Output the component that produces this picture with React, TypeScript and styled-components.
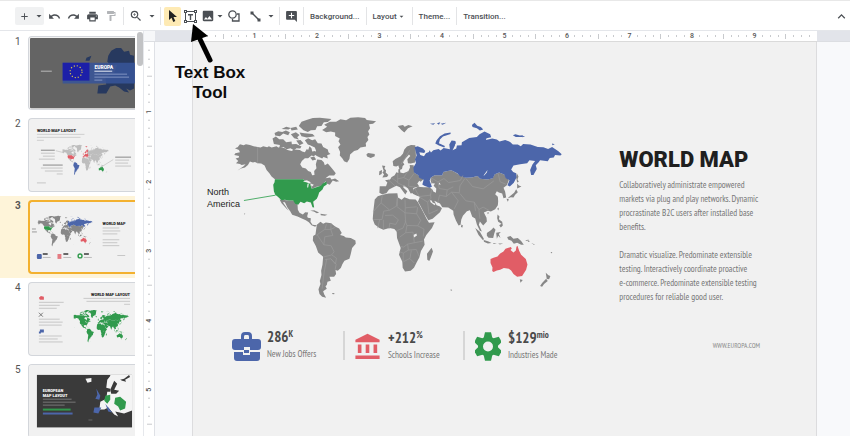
import React from "react";
import styled, { createGlobalStyle, css } from "styled-components";
import {
  MdAccountBalance,
  MdAdd,
  MdAddComment,
  MdArrowDropDown,
  MdFormatPaint,
  MdImage,
  MdKeyboardArrowUp,
  MdPrint,
  MdRedo,
  MdUndo,
  MdZoomIn,
} from "react-icons/md";

const ui = `Roboto, "Liberation Sans", sans-serif`;
const narrow = `"Liberation Sans Narrow", "PT Sans Narrow", Roboto, sans-serif`;

const GlobalStyle = createGlobalStyle`
  *, *::before, *::after { box-sizing: border-box; }
  body { margin: 0; background: #fff; font-family: ${ui}; color: #444; }
  h1, p, ol { margin: 0; padding: 0; }
  svg { display: block; }
  button { border: 0; padding: 0; background: none; font: inherit; color: inherit; }
`;

const Page = styled.div`
  position: relative;
  display: flex;
  flex-direction: column;
  height: 100vh;
  overflow: hidden;
`;

const Toolbar = styled.header`
  display: flex;
  align-items: center;
  gap: 1px;
  height: 31px;
  flex: none;
  padding: 2px 0 0 15px;
  border-bottom: 1px solid #e4e6ea;
  box-shadow: inset 0 2px 0 -1px #e8e8e8;
  color: #4b4f54;
`;

const Group = styled.div<{ $filled?: boolean }>`
  display: flex;
  align-items: center;
  height: 18px;
  border-radius: 2px;
  background: ${(p) => (p.$filled ? "#f0f1f2" : "transparent")};
`;

const ToolButton = styled.button<{ $w?: number; $active?: boolean; $faded?: boolean }>`
  display: flex;
  align-items: center;
  justify-content: center;
  flex: none;
  width: ${(p) => p.$w ?? 18}px;
  height: 19px;
  border-radius: 2px;
  ${(p) => p.$active && css`background: #feeab4; color: #222;`}
  ${(p) => p.$faded && css`color: #b2b4b7;`}

  svg { flex: none; }
`;

const TextButton = styled.button`
  display: flex;
  align-items: center;
  height: 19px;
  padding: 0 3px;
  font-size: 8px;
  font-weight: 500;
  white-space: nowrap;
`;

const Separator = styled.span`
  width: 1px;
  height: 18px;
  margin: 0 2px;
  background: #e3e4e6;
`;

const Spacer = styled.span`
  flex: 1;
`;

const Workspace = styled.div`
  display: flex;
  flex: 1;
  min-height: 0;
`;

const Filmstrip = styled.nav`
  display: flex;
  width: 144px;
  flex: none;
  overflow: hidden;
  border-right: 1px solid #e6e8ec;
`;

const FilmList = styled.ol`
  flex: 1;
  list-style: none;
  padding-top: 1px;
  overflow: hidden;
`;

const FilmRow = styled.li<{ $selected?: boolean }>`
  display: flex;
  height: 82px;
  padding: 4px 0;
  background: ${(p) => (p.$selected ? "#fef4d9" : "transparent")};
`;

const FilmNumber = styled.span<{ $selected?: boolean }>`
  width: 28px;
  padding-left: 15px;
  font-size: 10px;
  line-height: 12px;
  font-weight: ${(p) => (p.$selected ? 700 : 400)};
  color: #555;
`;

const Thumb = styled.button<{ $selected?: boolean }>`
  flex: 1;
  height: 74px;
  border: ${(p) => (p.$selected ? "2px solid #f3b12f" : "1px solid #d3d6db")};
  border-right: 0;
  border-radius: 4px 0 0 4px;
  background: #f1f1f1;
  overflow: hidden;
`;

const ThumbArt = styled.svg`
  width: 100%;
  height: 100%;
`;

const ScrollTrack = styled.div`
  width: 8px;
  padding: 1px 0 0 2px;
`;

const ScrollThumb = styled.div`
  height: 34px;
  border-radius: 3px;
  background: #c2c3c5;
`;

const Editor = styled.main`
  display: grid;
  grid-template-columns: 11px minmax(0, 37fr) minmax(0, 625fr) minmax(0, 33fr);
  grid-template-rows: 11px minmax(0, 1fr);
  flex: 1;
  min-width: 0;
`;

const RulerShade = styled.div<{ $corner?: boolean }>`
  background: ${(p) => (p.$corner ? "#f6f7f9" : "#e2e4ea")};
  border-bottom: 1px solid #dcdee2;
`;

const HRuler = styled.div`
  display: flex;
  align-items: center;
  padding: 0 4px;
  border-bottom: 1px solid #dadada;
  background: #fff;
`;

const VRuler = styled.div`
  display: flex;
  flex-direction: column;
  align-items: center;
  padding: 4px 0 7px;
  border-right: 1px solid #dfe1e6;
  background: #fff;
`;

const Mark = styled.span<{ $vertical?: boolean }>`
  display: flex;
  flex: 1 1 0;
  min-width: 0;
  min-height: 0;
  align-items: center;
  justify-content: center;
  font-size: 7px;
  line-height: 8px;
  font-weight: 500;
  color: #555;
  writing-mode: ${(p) => (p.$vertical ? "vertical-rl" : "horizontal-tb")};
  rotate: ${(p) => (p.$vertical ? "180deg" : "0deg")};
`;

const Tick = styled.i<{ $vertical?: boolean; $long?: boolean }>`
  display: block;
  width: ${(p) => (p.$vertical && p.$long ? 5 : p.$vertical ? 2 : 1)}px;
  height: ${(p) => (!p.$vertical && p.$long ? 5 : p.$vertical ? 1 : 2)}px;
  background: #c8cacd;
`;

const Gutter = styled.div`
  background: #f8f9fb;
`;

const Slide = styled.section`
  display: grid;
  grid-template-columns: minmax(0, 427fr) minmax(0, 197fr);
  align-content: start;
  padding-top: 63px;
  border-left: 1px solid #dcdcde;
  border-right: 1px solid #dcdcde;
  background: #f1f1f1;
`;

const Figure = styled.div`
  display: flex;
  flex-direction: column;
  gap: 22px;
`;

const MapFrame = styled.div`
  position: relative;
  margin-left: 12px;
`;

const MapArt = styled.svg`
  width: 100%;
`;

const MapLabel = styled.p`
  position: absolute;
  left: 2px;
  top: 81px;
  font: 9px/12px "Liberation Sans", Arial, sans-serif;
  color: #222;
`;

const Stats = styled.div`
  display: flex;
  margin-left: 30px;
`;

const Stat = styled.div`
  display: flex;
  align-items: center;
  gap: 6px;
  width: 120px;
  height: 36px;
  padding-left: 9px;

  & + & {
    border-left: 2px solid #d6d6d6;
    height: 29px;
    margin-top: 4px;
    padding-left: 8px;
  }
`;

const StatIcon = styled.span<{ $color: string }>`
  display: flex;
  justify-content: center;
  flex: none;
  width: 29px;
  margin-top: 3px;
  color: ${(p) => p.$color};
`;

const StatText = styled.div`
  display: flex;
  flex-direction: column;
  gap: 2px;
  font-family: ${narrow};
  white-space: nowrap;
`;

const StatValue = styled.strong`
  font-size: 15px;
  line-height: 17px;
  color: #4a4a4a;

  sup {
    font-size: 9px;
    line-height: 1;
    vertical-align: 5px;
  }
`;

const StatName = styled.span`
  font-size: 9px;
  line-height: 14px;
  color: #777;
`;

const Copy = styled.article`
  padding: 41px 50px 0 0;
  font: 9px/14px ${narrow};
  color: #777;
  white-space: nowrap;

  p + p { margin-top: 14px; }
`;

const Heading = styled.h1`
  margin-bottom: 5px;
  font: 900 22px/27px Roboto, sans-serif;
  color: #1f1f1f;
`;

const SiteLink = styled.a`
  display: block;
  margin-top: 35px;
  padding-right: 6px;
  text-align: right;
  font-size: 7px;
  color: #8a8a8a;
  text-decoration: none;
`;

const Callout = styled.aside`
  position: absolute;
  left: 172px;
  top: 22px;
  width: 76px;
  text-align: center;
  font: bold 17px/20px "Liberation Sans", Arial, sans-serif;
  color: #0c0c0c;
  pointer-events: none;
`;

const Arrow = styled.svg`
  width: 40px;
  height: 41px;
  margin-left: 2px;
`;

type MapColors = {
  land: string;
  north?: string;
  usa?: string;
  south?: string;
  europe?: string;
  russia?: string;
  australia?: string;
  lines?: string;
};

function WorldMap({ land, north, usa, south, europe, russia, australia, lines }: MapColors) {
  return (
    <g fill={land} strokeLinejoin="round">
      <g fill={north ?? land}>
        <path d="M30 130L38 127 45 118 56 121 63 118 75 120 86 124 98 126 107 128 115 124 127 127 132 124 140 128 155 124 160 128 168 127 180 130 188 135 200 138 208 134 225 135 232 140 240 142 246 132 250 135 254 124 260 130 262 140 271 138 275 147 267 154 260 152 250 160 240 160 231 168 226 178 232 188 243 191 250 198 258 201 262 211 269 210 268 198 275 190 273 178 277 164 290 165 297 172 300 181 309 176 318 186 326 196 333 205 328 212 313 212 302 220 316 218 320 224 331 221 343 229 334 231 324 227 315 240 305 236 302 229 290 243 275 246 262 252 256 238 245 230 235 223 150 223 140 215 134 206 125 195 119 182 109 176 98 175 90 171 84 173 75 170 69 180 60 188 48 191 35 198 56 184 62 178 50 180 45 177 33 175 40 168 32 161 42 158 42 153 28 150 31 145 45 142 42 135Z" />
        <path d="M143 101L153 95 163 103 175 103 184 112 200 110 201 118 214 117 230 125 226 131 215 130 207 136 197 130 185 133 176 126 163 130 165 120 147 117ZM149 84L160 79 172 81 183 77 195 82 190 91 175 86 165 94 151 92ZM170 72L184 65 198 69 191 74ZM197 69L214 65 219 74 200 77ZM198 88L213 82 224 90 217 97 222 104 208 100ZM222 63L230 50 245 45 264 39 285 38 320 42 309 51 297 52 290 63 277 64 272 75 258 76 249 81 236 76ZM224 83L239 85 263 87 270 94 246 98 230 94ZM240 106L250 100 262 106 271 103 279 115 290 116 295 126 309 134 311 142 317 147 307 151 309 161 296 156 292 161 276 153 266 146 274 138 270 128 256 121 249 119ZM214 107L227 105 236 115 224 121ZM256 158L268 155 274 164 263 167Z" />
        <path d="M292 75L307 65 298 59 315 50 334 50 347 43 364 46 377 38 400 37 421 39 426 45 454 49 445 56 433 58 436 70 430 79 434 89 428 96 431 105 423 115 424 125 407 128 399 135 388 138 376 149 374 162 367 173 358 169 353 161 345 152 346 141 340 127 347 119 341 109 345 101 331 93 331 83 318 80 304 82Z" />
        <path d="M164 284L192 287 205 287 218 299 219 315 224 324 234 329 241 322 250 323 247 334 249 339 258 340 257 351 263 360 276 361 271 366 260 361 252 352 243 346 231 341 218 335 202 330 196 319 188 309 180 292 174 292 191 317 185 312 170 295ZM256 318L268 316 283 323 276 325 267 320ZM287 327L308 330 300 333 288 331Z" />
      </g>
      <path fill={usa ?? land} d="M150 223L235 223 240 228 248 231 255 237 261 252 270 249 288 243 294 236 305 230 306 239 297 245 293 254 283 263 280 273 276 282 265 291 268 308 263 307 258 293 246 290 238 295 227 291 220 300 211 297 205 287 192 287 180 285 170 286 158 275 151 270 147 259 145 240 149 232Z" />
      <path fill="#f1f1f1" d="M234 230L246 226 258 232 254 236 244 232ZM248 237L252 236 250 248 247 248ZM256 235L267 240 261 246Z" />
      <path fill={south ?? land} d="M276 360L287 351 295 357 303 353 319 355 331 365 343 371 351 385 346 391 357 394 363 398 378 400 392 407 393 417 382 430 378 448 374 462 359 468 353 478 348 490 339 498 332 496 334 508 328 516 314 516 318 528 308 531 306 541 302 545 306 552 295 560 298 569 304 579 292 576 284 568 281 554 287 538 285 529 290 511 289 498 293 480 295 456 280 443 273 424 264 407 265 394 272 389Z" />
      <path d="M425 149L430 144 450 147 450 154 438 159 427 155ZM322 566l7-1-1 4-6-1ZM58 325l3 2-3 3Z" />

      <g transform="translate(435 0)">
        <g fill={europe ?? land}>
          <path d="M137 121L124 120 112 125 104 134 100 146 93 154 77 162 69 169 71 183 80 185 86 182 90 195 97 192 99 183 104 179 100 172 106 162 113 155 118 149 122 153 113 163 115 175 123 176 136 173 139 153ZM37 182L47 183 44 190 49 197 48 203 56 210 52 216 38 218 43 208 38 203 42 198ZM29 199L37 195 36 207 28 211ZM84 63L100 60 105 65 116 60 129 64 115 70 104 83 95 75Z" />
          <path d="M30 244L49 244 53 233 46 226 61 224 66 216 75 211 80 202 86 204 86 193 91 192 92 203 101 205 116 199 121 188 120 180 132 181 134 203 146 211 161 224 153 231 149 228 143 236 149 245 134 248 130 252 133 264 123 266 115 251 102 241 101 248 113 259 107 269 102 262 91 247 80 243 68 249 58 254 50 265 37 268 29 264Z" />
        </g>
        <path d="M131 253L145 246 162 247 179 247 190 255 188 241 183 228 184 218 195 211 218 211 221 201 245 196 258 203 270 210 289 219 306 218 324 213 332 222 354 224 369 220 376 208 389 203 404 209 418 226 412 241 402 249 407 261 410 278 402 280 398 266 388 263 382 259 377 268 385 276 386 289 385 301 377 313 364 320 355 318 343 323 351 339 352 350 341 362 331 350 328 360 337 380 331 378 322 359 317 341 308 336 301 316 292 319 280 333 275 345 273 360 267 362 259 347 252 329 251 318 236 308 218 307 211 296 194 288 201 301 210 304 217 310 211 322 189 342 176 346 164 326 152 303 145 290 151 276 142 273 129 267Z" />
        <path d="M15 284L24 274 38 270 57 266 83 265 85 278 96 285 104 277 120 283 138 284 145 292 153 307 163 326 170 340 178 354 195 352 187 370 170 391 163 404 165 420 154 439 149 458 142 471 133 489 123 498 106 500 99 489 98 471 88 450 93 430 82 400 81 381 74 373 59 370 41 375 29 370 15 359 9 343 11 318Z" />
        <path d="M186 429L190 440 184 457 179 469 173 465 172 447ZM276 359l4 3-2 7-4-3ZM317 370L331 381 343 402 341 407 327 391ZM343 406L357 410 366 415 355 416 343 411ZM352 385L365 376 372 368 378 375 374 387 371 400 357 399 352 393ZM380 384L394 382 388 388 393 400 386 393 382 402ZM370 415l12 1-9 2ZM386 416l15 0-10 3ZM384 329L390 335 388 343 398 351 400 362 394 368 389 361 396 357 386 351 383 340ZM383 312l5-4-1 9ZM353 323l6 0-4 5ZM413 397L423 394 432 402 445 400 455 409 463 420 455 420 443 414 433 417 426 408 416 404ZM467 407l11-3-5 5ZM477 406l4 4-6 2ZM485 414l12 6-4 0ZM451 524L460 526 453 534ZM529 504L537 512 543 514 539 524 532 523ZM530 522L535 529 524 538 518 546 512 544 518 535ZM544 442l5 0-4 4ZM508 457l5 2ZM243 554l5 2-4 3Z" />
        <path d="M443 236L448 242 456 245 443 251ZM440 253L445 262 437 270 432 278 424 277 414 281 421 274 434 264ZM411 282l7 1-3 8ZM442 205L447 215 444 224 448 231 443 233 440 217Z" />
        <g fill={russia ?? land}>
          <path d="M135 127L144 124 160 131 167 138 164 144 149 142 152 150 163 154 169 145 178 141 180 136 184 143 191 136 207 132 213 137 222 129 241 133 239 119 246 107 258 108 256 122 249 136 260 131 262 122 276 121 277 112 299 99 322 96 330 88 345 80 362 88 365 97 351 100 349 105 368 101 382 104 390 110 407 105 422 111 430 119 445 119 454 124 461 117 483 119 505 126 522 127 536 132 548 126 567 139 577 148 573 152 557 150 553 158 541 159 535 169 512 166 507 173 499 181 502 192 492 210 485 210 482 195 489 179 497 168 480 166 473 175 452 178 432 182 425 194 431 201 440 205 441 218 433 234 421 245 414 241 420 226 409 220 404 209 389 203 376 208 370 220 354 224 332 222 324 213 306 218 289 219 272 214 263 205 245 196 221 201 218 211 195 211 184 218 180 228 187 246 180 249 164 243 158 239 162 225 149 219 146 211 133 203 131 188 139 174 136 163 141 152Z" />
          <path d="M197 116L201 106 211 94 225 86 243 83 243 87 220 95 211 104 208 115 226 123 224 128 208 122ZM307 60L315 53 323 62 334 66 341 74 331 77 322 70 309 66ZM181 56l16-1-6 4ZM202 55l10-3-4 7ZM213 56l17-3-11 6ZM430 91l8-3 13 4 10-1-4 5-18 0ZM455 93l12 0-7 4ZM548 116l8 2-7 3ZM249 111l9 0 0 7Z" />
        </g>
        <path fill="#f1f1f1" d="M342 212l12-17-2 8-8 9ZM187 235L196 236 192 243 200 251 199 264 191 260 187 250ZM131 391L140 386 142 392 133 398ZM181 286l5 1 3 6 9 4-3 4-12-9ZM207 238l3-5 3 7Z" />
        <path fill={australia ?? land} d="M363 463L372 459 384 455 392 446 402 440 408 432 424 427 427 431 423 436 432 443 439 437 441 426 444 423 449 438 455 450 469 463 474 479 470 495 458 514 443 516 432 508 425 497 418 492 403 490 392 495 382 497 372 502 368 499 369 488 363 475Z" />
      </g>

      {lines && (
        <g fill="none" stroke={lines} strokeWidth="2">
          <path d="M98 126V175M305 358l-5 16-15 10-10 8M300 374l18 0 1-18M318 374l14-7M318 374l6 18-24 4-3 24-20-30M297 420l22 3 9 18-8 10-22 5M320 450l15 10-3 18-14-16-18 3M318 462l16 17-3 16M306 462l-8 40-6 50" />
          <g transform="translate(435 0)">
            <path d="M38 271L34 294 60 316 80 304 83 278M34 294L11 320M60 316l-18 3-5 25-27 0M80 304l26 20 2 26-8 20-20 8M83 278v26M106 285l1 24 34-3M107 309l-1 15 35 3 3-20M46 332l23-1 17 14-8 14-18-4-2 18M141 327l12 20-9 16-32-1-6-15M144 363l19 10-2 22M112 362l-4 22-18 13M108 384l22-2 4 32-20 4-12 9-11-2M134 414l26-5M114 418l2 18-15 9-11-4M116 436l24-2 8 20M101 445l-1 28M125 437l-4 24-18 9M120 461l14 14M30 344l-6 26M41 345v29" />
            <path d="M56 225l20 18M65 218l19 14M84 206l0 28 24 12M84 222l18-4 12-18M102 218l16 8 15-20M118 226l-1 18 20 3M120 136l-14 24-12 18M135 250l14 25 34-4 3-18M150 277l24 15 10-12-2-14M174 292l4 35 27-12M185 219l20 12 18-10 14 12 35-6 8-15M205 231l4 20 24 4 18-9M233 255l-3 20-20-4-6 24M230 275l16-13 23 2 2-21 15-22M246 262l20 26-12 24M271 266l18 22 25 4 4 26M289 221l20 24 32 7 32-24M314 292l14 22 13-7 18 10M328 314l3 28M185 219l4 14M386 206l6 25 17 7" />
          </g>
        </g>
      )}
    </g>
  );
}

const mainColors: MapColors = { land: "#878787", usa: "#319a4d", russia: "#4c66aa", australia: "#e15d66", lines: "#9b9b9b" };

function Lines({ x, y, widths, color = "#c6c6c6", end }: { x: number; y: number; widths: number[]; color?: string; end?: boolean }) {
  return (
    <g fill={color}>
      {widths.map((w, i) => (
        <rect key={i} x={end ? x - w : x} y={y + i * 3} width={w} height="1" />
      ))}
    </g>
  );
}

const titleProps = { fontFamily: "Roboto, sans-serif", fontWeight: 900 };

const Art = ({ children }: { children: React.ReactNode }) => (
  <ThumbArt viewBox="0 0 107 74" preserveAspectRatio="xMinYMin slice" aria-hidden="true">
    {children}
  </ThumbArt>
);

function CoverArt() {
  return (
    <Art>
      <rect x="1" y="1" width="108" height="71" rx="1" fill="#646464" />
      <path fill="#27395f" d="M58 21l5-2-2 5-4 0ZM80 19l3-5 5-3 5 0 3 4 5-1 1 4 4 1v33l-4 2-4-2 3 4-5-1-5-4-4-2-5 1-4 7-9 0 1-8 8-1-1-7 9-5 3-8-6 1-4-4Z" />
      <path fill="#385499" opacity=".88" d="M34 26h73v21H34z" />
      <rect x="34" y="26" width="27" height="18" fill="#1c1fa8" />
      <circle cx="47.5" cy="35" r="6" fill="none" stroke="#d7c44a" strokeWidth="1.2" strokeDasharray="1.2 1.94" />
      <text x="66" y="32" fontSize="5" fill="#fff" {...titleProps}>EUROPA</text>
      <Lines x={66} y={34} widths={[18]} color="#e9edf6" />
      <Lines x={66} y={37} widths={[33, 35, 8]} color="#8194c2" />
      <Lines x={12} y={34} widths={[11]} color="#bbb" />
    </Art>
  );
}

function LayoutArt() {
  return (
    <Art>
      <text x="8" y="13" fontSize="4" fill="#222" {...titleProps}>WORLD MAP LAYOUT</text>
      <Lines x={8} y={15} widths={[48, 44, 7]} color="#cfcfcf" />
      <g transform="translate(32 24) scale(.048 .056)">
        <WorldMap land="#bdbdbd" usa="#e15d66" south="#4c66aa" europe="#e15d66" australia="#319a4d" />
      </g>
      <path d="M27 32l8 2M72 49l13-8" stroke="#b9b9b9" strokeWidth=".6" />
      <Lines x={26} y={31} widths={[14]} color="#888" end />
      <Lines x={26} y={34} widths={[14, 12, 16]} end />
      <Lines x={34} y={46} widths={[20]} color="#888" end />
      <Lines x={34} y={49} widths={[22, 18, 6]} end />
      <Lines x={87} y={38} widths={[16]} color="#888" />
      <Lines x={87} y={41} widths={[14, 13, 16]} />
      <Lines x={8} y={64} widths={[9]} />
    </Art>
  );
}

function CurrentArt() {
  return (
    <Art>
      <g transform="translate(6 12) scale(.057)"><WorldMap {...mainColors} lines={undefined} /></g>
      <Lines x={2} y={27} widths={[4, 5]} color="#999" />
      <text x="74" y="23" fontSize="4" fill="#222" {...titleProps}>WORLD MAP</text>
      <Lines x={74} y={26} widths={[17, 18, 15]} />
      <Lines x={74} y={38} widths={[17, 15, 17]} />
      <rect x="7" y="53" width="5" height="5" rx="1" fill="#4c66aa" />
      <rect x="28" y="53" width="4" height="5" fill="#e47c83" />
      <circle cx="51" cy="55" r="2" fill="none" stroke="#319a4d" strokeWidth="1.4" />
      {[13, 34, 55].map((x) => (
        <g key={x}>
          <rect x={x} y="52" width="5" height="2" fill="#666" />
          <rect x={x} y="56" width="8" height="1" fill="#bbb" />
        </g>
      ))}
      <Lines x={89} y={54} widths={[8]} />
    </Art>
  );
}

function GreenArt() {
  return (
    <Art>
      <text x="102" y="13" fontSize="4" fill="#222" textAnchor="end" {...titleProps}>WORLD MAP LAYOUT</text>
      <Lines x={102} y={15} widths={[47, 44, 6]} color="#c9c9c9" end />
      <g transform="translate(43 25) scale(.057 .06)"><WorldMap land="#319a4d" /></g>
      <path fill="#e15d66" d="M10 15l2-2 3 1v3h-4Z" />
      <path stroke="#777" d="M10 30l4 4m0-4l-4 4" />
      <path fill="#4c66aa" d="M11 47h4v3h-4zM10 49h2v2h-2z" />
      <Lines x={10} y={19} widths={[25, 21, 18]} />
      <Lines x={10} y={36} widths={[21, 24, 23]} />
      <Lines x={10} y={53} widths={[23, 19, 24]} />
    </Art>
  );
}

function EuropeArt() {
  return (
    <Art>
      <rect width="107" height="74" fill="#f1f1f1" />
      <rect x="8" y="10" width="96" height="53" fill="#3a3a3a" />
      <path fill="#f4f4f4" d="M57 14l6-1 0 4-4 1ZM82 10h22v36l-8 3-9-2 3 5-4-2-6-7-4 2-5 0 1-8 6-3 1-7 3 0 0-3-4-1 1-8 3-4Z" />
      <path fill="#3a3a3a" d="M86 16l-4 9 1 4 5 0 3-3-5-1 3-6ZM92 15l4-1 5-4 1 2-5 3 1 2-4-1Z" />
      <path fill="#4c66aa" d="M68 24l4 7-1 4-4-1 2-4ZM66 43l7 0-3 6-5-1ZM77 39l7 9-4-1Z" />
      <path fill="#319a4d" d="M77 31l5-1 0 5-3 4-3-3ZM87 33l5-1 6 5-1 7-5 2-2-4-4-3Z" />
      <g fontSize="4" fill="#fff" {...titleProps}>
        <text x="14" y="27">EUROPEAN</text>
        <text x="14" y="32">MAP LAYOUT</text>
      </g>
      <Lines x={14} y={34} widths={[29, 33, 22]} color="#777" />
      <rect x="14" y="44" width="28" height="2" fill="#319a4d" />
      <rect x="14" y="48" width="30" height="2" fill="#4c66aa" />
      <Lines x={60} y={55} widths={[4]} color="#666" />
    </Art>
  );
}

const slides = [CoverArt, LayoutArt, CurrentArt, GreenArt, EuropeArt];

const marks = (count: number, vertical = false) =>
  Array.from({ length: count }, (_, i) => i + 1).map((n) => (
    <Mark key={n} $vertical={vertical}>
      {n % 8 === 0 ? n / 8 : <Tick $vertical={vertical} $long={n % 4 === 0} />}
    </Mark>
  ));

const CursorIcon = () => (
  <svg width="10" height="12" viewBox="0 0 10 12"><path fill="currentColor" d="M1 0v10l2.500-2.200L5.300 12l2-.9L5.500 7H9Z" /></svg>
);
const TextBoxIcon = () => (
  <svg width="13" height="13" viewBox="0 0 13 13">
    <path fill="none" stroke="currentColor" d="M2 1.500h9M2 11.500h9M1.500 2v9M11.500 2v9" />
    <path fill="currentColor" d="M0 0h3v3H0zM10 0h3v3h-3zM0 10h3v3H0zM10 10h3v3h-3zM4 4h5v1.500H7.200V10H5.800V5.500H4z" />
    <path fill="#fff" d="M1 1h1v1H1zM11 1h1v1h-1zM1 11h1v1H1zM11 11h1v1h-1z" />
  </svg>
);
const ShapeIcon = () => (
  <svg width="12" height="12" viewBox="0 0 12 12" fill="none" stroke="currentColor" strokeWidth="1.300">
    <circle cx="4.500" cy="4.500" r="3.700" /><path d="M9 4h2v7H4.500V9" />
  </svg>
);
const LineIcon = () => (
  <svg width="11" height="11" viewBox="0 0 11 11">
    <path stroke="currentColor" strokeWidth="1.500" d="M2 2l7 7" />
    <path fill="currentColor" d="M.5.5h3v3h-3zM7.500 7.500h3v3h-3z" />
  </svg>
);
const Briefcase = () => (
  <svg width="29" height="29" viewBox="0 0 29 29" fill="currentColor">
    <path d="M9 7V4q0-4 4-4h3q4 0 4 4v3h6q3 0 3 3v5q0 3-3 3h-8v-3h-6v3H3q-3 0-3-3v-5q0-3 3-3Zm3 0h5V5q0-2-1-2h-3q-1 0-1 2Z" />
    <path d="M12 18h5v3h-5zM2 20h9v3h7v-3h10v6q0 3-3 3H5q-3 0-3-3Z" />
  </svg>
);
const Gear = () => (
  <svg width="26" height="29" viewBox="-13 -14.500 26 29">
    <circle r="7.500" fill="none" stroke="currentColor" strokeWidth="5" />
    {[0, 60, 120, 180, 240, 300].map((a) => (
      <path key={a} transform={`rotate(${a})`} fill="currentColor" d="M-3-14.200h6L4.500-8h-9Z" />
    ))}
  </svg>
);

const Caret = ({ label, w = 11 }: { label: string; w?: number }) => (
  <ToolButton $w={w} aria-label={label}><MdArrowDropDown size={12} /></ToolButton>
);

export default function App() {
  return (
    <Page>
      <GlobalStyle />
      <Toolbar>
        <Group $filled>
          <ToolButton aria-label="New slide"><MdAdd size={11} /></ToolButton>
          <Caret label="New slide options" />
        </Group>
        <ToolButton aria-label="Undo"><MdUndo size={13} /></ToolButton>
        <ToolButton aria-label="Redo"><MdRedo size={13} /></ToolButton>
        <ToolButton aria-label="Print"><MdPrint size={13} /></ToolButton>
        <ToolButton $faded aria-label="Paint format"><MdFormatPaint size={12} /></ToolButton>
        <Separator />
        <ToolButton aria-label="Zoom"><MdZoomIn size={14} /></ToolButton>
        <Caret label="Zoom options" />
        <Separator />
        <ToolButton $w={17} $active aria-label="Select"><CursorIcon /></ToolButton>
        <ToolButton $w={17} aria-label="Text box"><TextBoxIcon /></ToolButton>
        <Group>
          <ToolButton $w={16} aria-label="Insert image"><MdImage size={14} /></ToolButton>
          <Caret label="Image options" w={7} />
        </Group>
        <ToolButton $w={20} aria-label="Shape"><ShapeIcon /></ToolButton>
        <Group>
          <ToolButton $w={20} aria-label="Line"><LineIcon /></ToolButton>
          <Caret label="Line options" />
        </Group>
        <Separator />
        <ToolButton $w={17} aria-label="Add comment"><MdAddComment size={13} /></ToolButton>
        <Separator />
        <TextButton>Background...</TextButton>
        <Separator />
        <TextButton>Layout<MdArrowDropDown size={9} /></TextButton>
        <Separator />
        <TextButton>Theme...</TextButton>
        <Separator />
        <TextButton>Transition...</TextButton>
        <Spacer />
        <ToolButton aria-label="Hide the menus"><MdKeyboardArrowUp size={15} /></ToolButton>
      </Toolbar>

      <Workspace>
        <Filmstrip aria-label="Slides">
          <FilmList>
            {slides.map((Picture, i) => (
              <FilmRow key={i} $selected={i === 2}>
                <FilmNumber $selected={i === 2}>{i + 1}</FilmNumber>
                <Thumb $selected={i === 2} aria-label={`Slide ${i + 1}`}><Picture /></Thumb>
              </FilmRow>
            ))}
          </FilmList>
          <ScrollTrack><ScrollThumb /></ScrollTrack>
        </Filmstrip>

        <Editor>
          <RulerShade $corner />
          <RulerShade />
          <HRuler>{marks(79)}</HRuler>
          <RulerShade />
          <VRuler>{marks(44, true)}</VRuler>
          <Gutter />
          <Slide>
            <Figure>
              <MapFrame>
                <MapArt viewBox="-60 0 1245 600" role="img" aria-label="World map">
                  <WorldMap {...mainColors} />
                  <path d="M57 287L152 271" stroke="#4fae69" strokeWidth="3" />
                </MapArt>
                <MapLabel>North<br />America</MapLabel>
              </MapFrame>
              <Stats>
                <Stat>
                  <StatIcon $color="#4c66aa"><Briefcase /></StatIcon>
                  <StatText><StatValue>286<sup>K</sup></StatValue><StatName>New Jobs Offers</StatName></StatText>
                </Stat>
                <Stat>
                  <StatIcon $color="#e15d66"><MdAccountBalance size={30} /></StatIcon>
                  <StatText><StatValue>+212<sup>%</sup></StatValue><StatName>Schools Increase</StatName></StatText>
                </Stat>
                <Stat>
                  <StatIcon $color="#319a4d"><Gear /></StatIcon>
                  <StatText><StatValue>$129<sup>mio</sup></StatValue><StatName>Industries Made</StatName></StatText>
                </Stat>
              </Stats>
            </Figure>
            <Copy>
              <Heading>WORLD MAP</Heading>
              <p>Collaboratively administrate empowered<br />markets via plug and play networks. Dynamic<br />procrastinate B2C users after installed base<br />benefits.</p>
              <p>Dramatic visualize. Predominate extensible<br />testing. Interactively coordinate proactive<br />e-commerce. Predominate extensible testing<br />procedures for reliable good user.</p>
              <SiteLink href="#europa">WWW.EUROPA.COM</SiteLink>
            </Copy>
          </Slide>
          <Gutter />
        </Editor>
      </Workspace>

      <Callout>
        <Arrow viewBox="0 0 40 41" aria-hidden="true">
          <path d="M24 13L36 38" stroke="#000" strokeWidth="5" strokeLinecap="round" />
          <path d="M19 2L17 20 34 14Z" fill="#000" />
        </Arrow>
        Text Box<br />Tool
      </Callout>
    </Page>
  );
}
